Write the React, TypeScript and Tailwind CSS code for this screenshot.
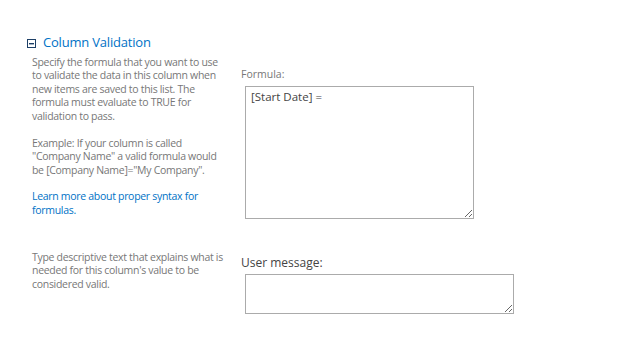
import React from "react";

const font = { fontFamily: '"Open Sans", "Noto Sans", sans-serif' };

export default function App() {
  return (
    <div className="w-[633px] h-[350px] bg-white overflow-hidden" style={font}>
      <div className="pt-[33px] pl-[27px]">
        <div className="flex items-center gap-[7px] h-[20px]">
          <svg width="9" height="9" viewBox="0 0 9 9" className="shrink-0">
            <rect x="0.5" y="0.5" width="8" height="8" fill="#fff" stroke="#1d3f66" />
            <rect x="2" y="4" width="5" height="1.4" fill="#1d3f66" />
          </svg>
          <span className="text-[13px] text-[#0072c6] tracking-[-0.2px]">Column Validation</span>
        </div>
        <div className="grid grid-cols-[209px_1fr] pl-[5px]">
          <div className="text-[10.5px] leading-[13.4px] tracking-[-0.3px] text-[#777] pt-[3px] w-[193px]">
            <p>
              Specify the formula that you want to use to validate the data in this column when new items are saved to this list. The formula must evaluate to TRUE for validation to pass.
            </p>
            <p className="mt-[14px]">
              Example: If your column is called "Company Name" a valid formula would be [Company Name]="My Company".
            </p>
            <p className="mt-[13px] text-[#0072c6]">Learn more about proper syntax for formulas.</p>
          </div>
          <div className="pt-[14px]">
            <div className="text-[10.5px] text-[#777] leading-[15px]">Formula:</div>
            <textarea
              defaultValue="[Start Date] ="
              className="block mt-[4px] ml-[4px] w-[229px] h-[133px] border border-[#ababab] text-[#444] text-[11.5px] leading-[16px] px-[5px] py-[2px] outline-none resize"
            />
          </div>
          <div className="text-[10.5px] leading-[13.4px] tracking-[-0.3px] text-[#777] pt-[32px] w-[193px]">
            Type descriptive text that explains what is needed for this column's value to be considered valid.
          </div>
          <div className="pt-[35px]">
            <div className="text-[12px] text-[#444] leading-[17px]">User message:</div>
            <textarea className="block mt-[3px] ml-[4px] w-[269px] h-[40px] border border-[#ababab] outline-none resize" />
          </div>
        </div>
      </div>
    </div>
  );
}
